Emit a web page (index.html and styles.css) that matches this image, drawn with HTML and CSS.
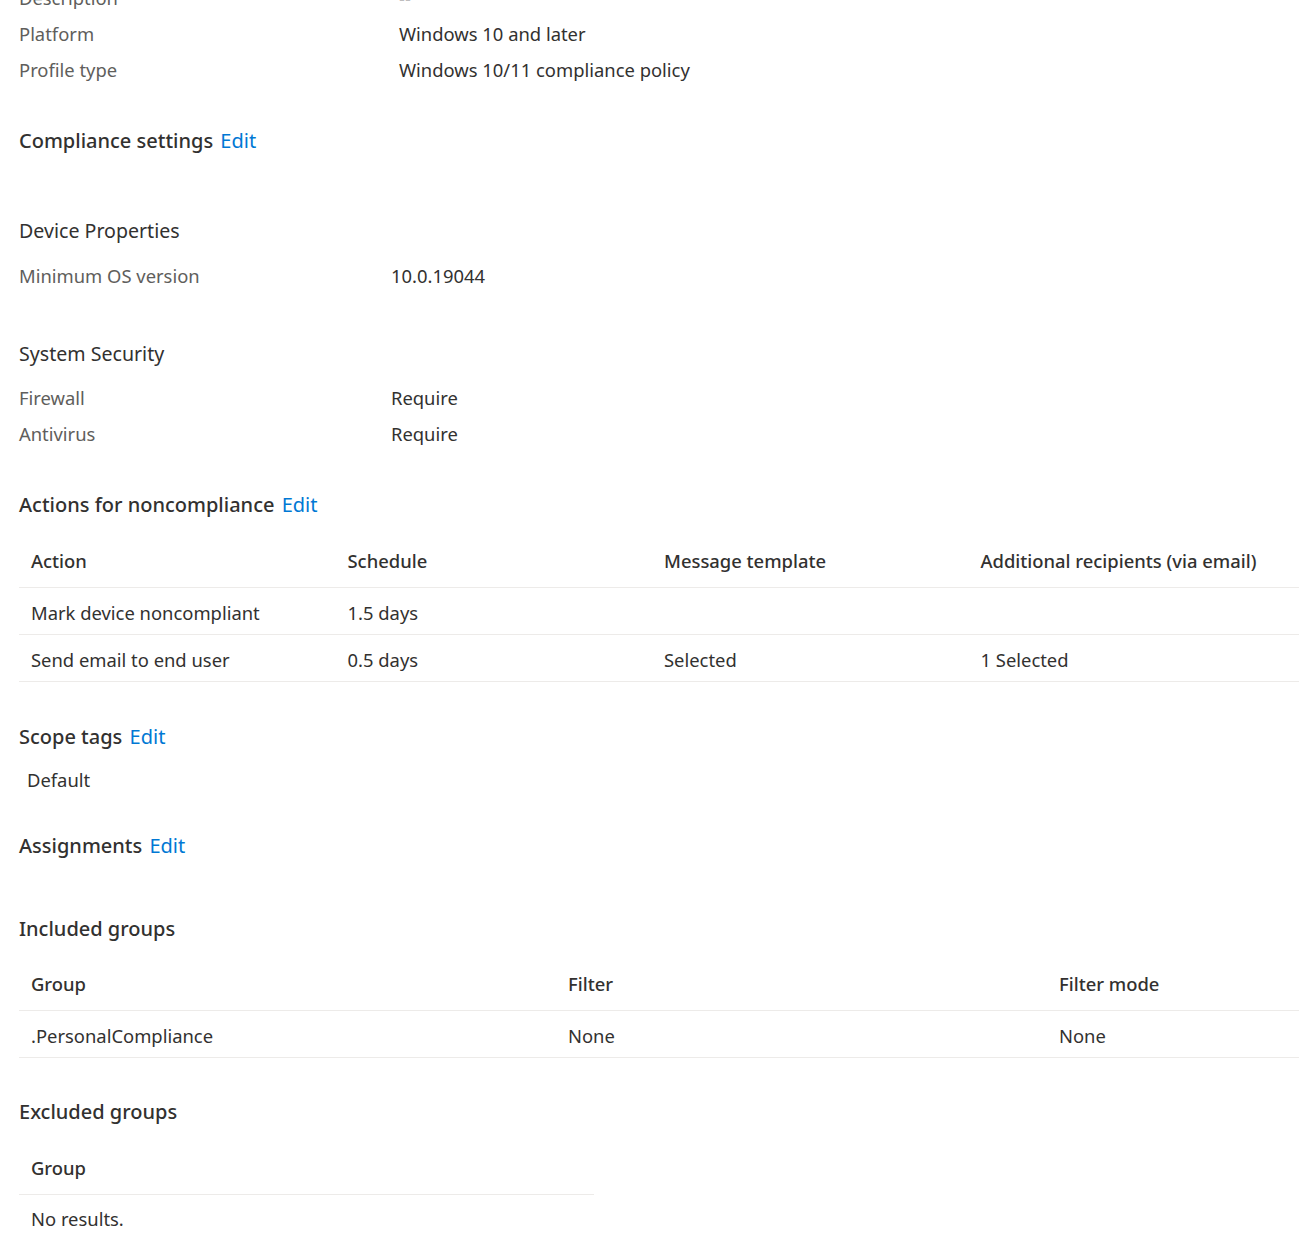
FILE: index.html
```html
<!DOCTYPE html>
<html>
<head>
<meta charset="utf-8">
<link rel="stylesheet" href="styles.css">
</head>
<body>
<div class="page">
  <div class="props">
    <div class="prop"><span class="label">Description</span><span class="value">--</span></div>
    <div class="prop"><span class="label">Platform</span><span class="value">Windows 10 and later</span></div>
    <div class="prop"><span class="label">Profile type</span><span class="value">Windows 10/11 compliance policy</span></div>
  </div>

  <h2 class="section sec-compliance">Compliance settings <a class="edit">Edit</a></h2>

  <h3 class="sub sub-device">Device Properties</h3>
  <div class="props settings">
    <div class="prop"><span class="label">Minimum OS version</span><span class="value">10.0.19044</span></div>
  </div>

  <h3 class="sub sub-system">System Security</h3>
  <div class="props settings">
    <div class="prop"><span class="label">Firewall</span><span class="value">Require</span></div>
    <div class="prop"><span class="label">Antivirus</span><span class="value">Require</span></div>
  </div>

  <h2 class="section sec-actions">Actions for noncompliance <a class="edit">Edit</a></h2>
  <table class="grid actions">
    <thead><tr><th>Action</th><th>Schedule</th><th>Message template</th><th>Additional recipients (via email)</th></tr></thead>
    <tbody>
      <tr><td>Mark device noncompliant</td><td>1.5 days</td><td></td><td></td></tr>
      <tr><td>Send email to end user</td><td>0.5 days</td><td>Selected</td><td>1 Selected</td></tr>
    </tbody>
  </table>

  <h2 class="section sec-scope">Scope tags <a class="edit">Edit</a></h2>
  <div class="tag">Default</div>

  <h2 class="section sec-assign">Assignments <a class="edit">Edit</a></h2>

  <h2 class="section sec-included">Included groups</h2>
  <table class="grid groups">
    <thead><tr><th>Group</th><th>Filter</th><th>Filter mode</th></tr></thead>
    <tbody>
      <tr><td>.PersonalCompliance</td><td>None</td><td>None</td></tr>
    </tbody>
  </table>

  <h2 class="section sec-excluded">Excluded groups</h2>
  <table class="grid excluded">
    <thead><tr><th>Group</th></tr></thead>
    <tbody>
      <tr><td>No results.</td></tr>
    </tbody>
  </table>
</div>
</body>
</html>
```

FILE: styles.css
```css
html, body {
  margin: 0;
  padding: 0;
  background: #ffffff;
  overflow: hidden;
}
body {
  font-family: "Segoe UI", "Noto Sans", "Open Sans", sans-serif;
  color: #323130;
  font-size: 18.4px;
}
.page {
  margin-top: -20px;
  padding-left: 19px;
}
.props .prop {
  display: flex;
  height: 36px;
  box-sizing: border-box;
  padding-bottom: 2px;
  align-items: center;
}
.label {
  color: #605e5c;
  width: 380px;
  flex: none;
}
.value {
  color: #323130;
}
.settings .label {
  width: 372px;
}
h2.section, h3.sub {
  margin: 0;
  height: 28px;
  line-height: 28px;
  font-size: 19.6px;
  color: #323130;
}
h2.section {
  font-weight: 500;
  font-size: 20px;
}
h3.sub {
  font-weight: 400;
}
.edit {
  color: #0078d4;
  font-weight: 400;
  margin-left: 2px;
}
.sec-compliance { margin-top: 39px !important; }
.sub-device { margin-top: 62px !important; }
.sub-device + .settings { margin-top: 13px; }
.sub-system { margin-top: 46px !important; }
.sub-system + .settings { margin-top: 12px; }
.sec-actions { margin-top: 39px !important; }
.sec-scope { margin-top: 41px !important; }
.sec-assign { margin-top: 34px !important; }
.sec-included { margin-top: 55px !important; }
.sec-excluded { margin-top: 40px !important; }

.tag {
  margin-top: 11px;
  height: 36px;
  line-height: 36px;
  padding-left: 8px;
}

table.grid {
  margin-top: 16px;
  border-collapse: collapse;
  table-layout: fixed;
}
table.grid th {
  text-align: left;
  font-weight: 500;
  height: 52px;
  box-sizing: border-box;
  padding: 0 12px 1px;
  border-bottom: 1px solid #edebe9;
  vertical-align: middle;
  white-space: nowrap;
}
table.grid td {
  height: 47px;
  padding: 0 12px;
  border-bottom: 1px solid #edebe9;
  vertical-align: middle;
  padding-top: 3px;
  box-sizing: border-box;
  white-space: nowrap;
}
table.actions { width: 1280px; }
table.actions th:nth-child(1),
table.actions th:nth-child(2),
table.actions th:nth-child(3) { width: 316.5px; }
table.groups { width: 1280px; }
table.groups th:nth-child(1) { width: 537px; }
table.groups th:nth-child(2) { width: 491px; }
table.excluded { width: 575px; }
table.excluded td { padding-top: 0; padding-bottom: 4px; height: 52px; }
```
